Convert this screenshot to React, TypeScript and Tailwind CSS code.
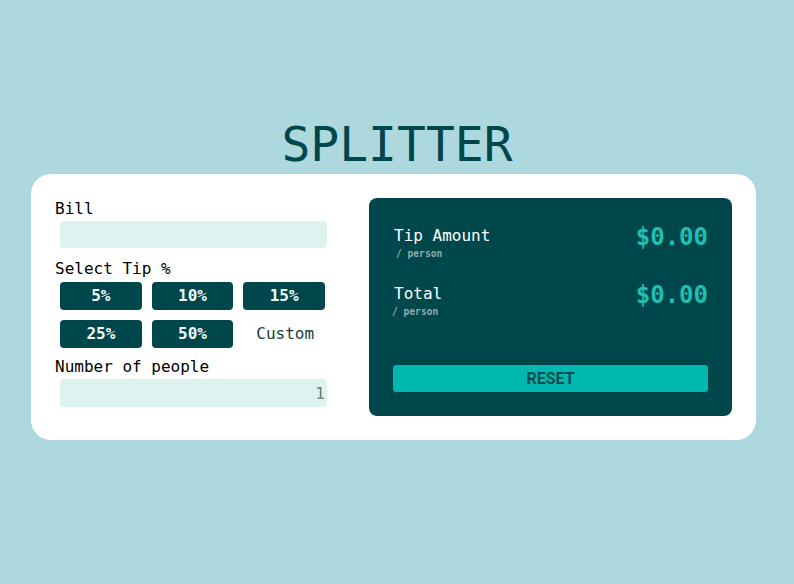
import { useState } from 'react'

// Tip splitter calculator card
const mono = "font-['DejaVu_Sans_Mono','Liberation_Mono',monospace]"

const tips = [5, 10, 15, 25, 50]

export default function App(): JSX.Element {
  const [bill, setBill] = useState('')
  const [people, setPeople] = useState('1')

  return (
    <div className={`min-h-[584px] bg-[#acd8de] pt-[116px] ${mono}`}>
      <h1 className="mb-[2px] text-center text-[48px] leading-[56px] text-[#00474b]">SPLITTER</h1>
      <div className="ml-[31px] flex w-[725px] rounded-[20px] bg-white">
        {/* inputs */}
        <div className="w-[338px] pt-[23px] pl-6">
          <label className="block text-base leading-6 text-black">Bill</label>
          <input
            value={bill}
            onChange={(e) => setBill(e.target.value)}
            className="ml-[5px] block h-[27px] w-[267px] rounded-[4px] bg-[#ddf3f0] px-2 text-right outline-none"
          />
          <div className="mt-[9px] text-base leading-6 text-black">Select Tip %</div>
          <div className="mt-px ml-[5px] grid w-[265px] grid-cols-3 gap-x-[10px] gap-y-[10px]">
            {tips.map((t) => (
              <button key={t} className="h-[28px] rounded-[4px] bg-[#00474b] text-base font-bold text-[#f2fbfa]">
                {t}%
              </button>
            ))}
            <div className="flex h-[28px] items-center pl-[13px] text-base text-[#1c3b3d]">Custom</div>
          </div>
          <div className="mt-[7px] text-base leading-6 text-black">Number of people</div>
          <input
            value={people}
            onChange={(e) => setPeople(e.target.value)}
            className="ml-[5px] block h-[28px] w-[267px] rounded-[4px] bg-[#ddf3f0] pr-[2px] text-right text-base text-[#6f7777] outline-none"
          />
        </div>

        {/* results */}
        <div className="my-6 flex h-[218px] w-[363px] flex-col rounded-[8px] bg-[#00474b] pt-[26px] pr-6 pl-[25px] pb-6">
          <div className="flex items-start justify-between">
            <div>
              <div className="text-base leading-6 font-medium text-white">Tip Amount</div>
              <div className="ml-[2px] text-[9.6px] leading-[12px] font-bold text-[#8fabad]">/ person</div>
            </div>
            <div className="-mt-[3px] text-[24px] leading-[32px] font-bold text-[#1fbfb1]">$0.00</div>
          </div>
          <div className="mt-[22px] flex items-start justify-between">
            <div>
              <div className="text-base leading-6 font-medium text-white">Total</div>
              <div className="-ml-[2px] text-[9.6px] leading-[12px] font-bold text-[#8fabad]">/ person</div>
            </div>
            <div className="-mt-[3px] text-[24px] leading-[32px] font-bold text-[#1fbfb1]">$0.00</div>
          </div>
          <button
            onClick={() => {
              setBill('')
              setPeople('1')
            }}
            className="mt-auto h-[27px] w-[315px] -ml-px rounded-[3px] bg-[#00b8b0] font-['Roboto',sans-serif] text-base font-bold text-[#0b4e52]"
          >
            RESET
          </button>
        </div>
      </div>
    </div>
  )
}
